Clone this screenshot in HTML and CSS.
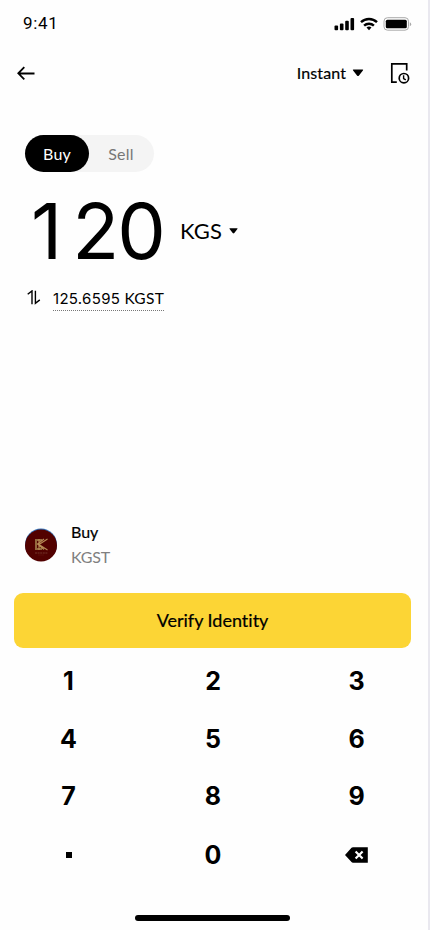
FILE: index.html
```html
<!DOCTYPE html>
<html lang="en">
<head>
<meta charset="utf-8">
<title>Buy KGST</title>
<link rel="stylesheet" href="styles.css">
</head>
<body>
<main class="screen">
  <div class="status">
    <span class="time">9:41</span>
    <svg class="indicators" width="78" height="16" viewBox="0 0 78 16">
      <rect x="0.500" y="9.5" width="3.6" height="4.7" rx="1"/>
      <rect x="5.900" y="7.5" width="3.6" height="6.7" rx="1"/>
      <rect x="11.200" y="4.8" width="3.6" height="9.4" rx="1"/>
      <rect x="16.500" y="2" width="3.6" height="12.2" rx="1"/>
      <g fill="none" stroke="#000" stroke-width="2.4">
        <path d="M27 6.2a11.500 11.500 0 0 1 16 0M30.100 9.700a7.100 7.100 0 0 1 9.800 0"/>
      </g>
      <path d="M35 14.200l-2.500-2.600a4 4 0 0 1 5 0z"/>
      <rect x="50" y="1.700" width="24.500" height="12.500" rx="3.500" fill="none" stroke="#aaa"/>
      <rect x="51.800" y="3.700" width="21" height="8.500" rx="1.500"/>
      <path d="M75.800 6.200v4q1.400-.5 1.400-2t-1.400-2z" fill="#aaa"/>
    </svg>
  </div>
  <header class="topbar">
    <svg class="back" width="18" height="14" viewBox="0 0 18 14"><path d="M17.500 7.500H1.500M7.300 1.200L1.300 7.300l6 6" fill="none" stroke="#000" stroke-width="1.800"/></svg>
    <span class="mode">Instant</span>
    <svg class="mode-caret" width="12" height="8" viewBox="0 0 12 8"><path d="M1.500 .5h9q1.200 0 .4 1L7 6.500q-1 1-2 0L1.100 1.500q-.8-1 .4-1z"/></svg>
    <svg class="history" width="20" height="22" viewBox="0 0 20 22"><g fill="none" stroke="#000" stroke-width="1.700"><path d="M6.800 20.200H1.800V1.800H16.700V8.500"/><circle cx="13.900" cy="16.200" r="4.700"/><path d="M13.600 13.300v3.200l2.200 1.400" stroke-width="1.400"/></g></svg>
  </header>
  <div class="toggle"><span class="tab tab-active">Buy</span><span class="tab">Sell</span></div>
  <section class="amount">
    <span class="value"><span class="lead">1</span>20</span>
    <span class="currency">KGS</span>
    <svg class="caret" width="9" height="6" viewBox="0 0 9 6"><path d="M1 .3h7q1 0 .4.8L5.300 5q-.8.800-1.600 0L.6 1.100Q0 .3 1 .3z"/></svg>
  </section>
  <section class="conversion">
    <svg width="14" height="15" viewBox="0 0 14 15"><path d="M.7 4.300L5 .9V14.200M8.400 .7V13.400L12.800 9.900" fill="none" stroke="#000" stroke-width="1.400"/></svg>
    <span class="converted"><span class="number">125.6595</span> KGST</span>
  </section>
  <section class="asset">
    <svg class="coin" width="32" height="34" viewBox="0 0 32 34">
      <circle cx="16" cy="16.500" r="16" fill="#3673b8"/>
      <ellipse cx="16" cy="17.500" rx="16" ry="16" fill="#520100"/>
      <path d="M10 11h7v2h-5v7h5v2h-7z" fill="#94683e"/>
      <path d="M22.500 11L14 16.500l8.500 5.500M19 11l-6.500 5 6.500 5.500M14 11v11" fill="none" stroke="#b88c57" stroke-width="1.100"/>
      <path d="M10 25h13" stroke="#75372a" stroke-width="1" stroke-dasharray="2 .6"/>
      <path d="M13 27h6" stroke="#65180f" stroke-width=".6"/>
    </svg>
    <div class="asset-text"><span class="action">Buy</span><span class="ticker">KGST</span></div>
  </section>
  <button class="verify">Verify Identity</button>
  <div class="keypad">
    <span>1</span><span>2</span><span>3</span>
    <span>4</span><span>5</span><span>6</span>
    <span>7</span><span>8</span><span>9</span>
    <span><i class="dot"></i></span><span>0</span>
    <span><svg width="23" height="16" viewBox="0 0 23 16"><path d="M0 8L6.500 .8Q7 .2 8 .2H22.800V15.700H8Q7 15.700 6.500 15z"/><path d="M10.600 4.500l7 7m0-7l-7 7" stroke="#fff" stroke-width="2.200"/></svg></span>
  </div>
  <div class="home"></div>
</main>
</body>
</html>
```
FILE: styles.css
```css
* { box-sizing: border-box; }
body { margin: 0; background: #fefefe; color: #000; font-family: Lato, sans-serif; font-variant-ligatures: none; }
svg { display: block; flex: none; }
.screen { width: 430px; height: 930px; overflow: hidden; border-right: 2px solid #e9e8ef; display: flex; flex-direction: column; }
.status { height: 48px; padding: 0 16px 0 23px; display: flex; align-items: center; justify-content: space-between; }
.time { font: 17px/20px Roboto, sans-serif; letter-spacing: .7px; margin-top: -3px; }
.topbar { height: 50px; padding: 0 18px 0 17px; display: flex; align-items: center; }
.mode { margin-left: auto; font-size: 16px; line-height: 20px; -webkit-text-stroke: .2px; letter-spacing: .1px; }
.mode-caret { margin: 0 26px 0 6px; }
.toggle { width: 129px; height: 37px; margin: 37px 0 0 25px; border-radius: 19px; background: #f4f4f4; display: flex; }
.tab { width: 64px; line-height: 38px; text-align: center; font-size: 16px; color: #777; letter-spacing: .2px; }
.tab-active { color: #fff; background: #000; border-radius: 19px; }
.amount { height: 119px; padding-left: 31px; display: flex; align-items: center; }
.value { width: 136px; white-space: nowrap; font: 77px/119px Inter, sans-serif; letter-spacing: -2px; }
.lead { letter-spacing: 10px; }
.currency { font-size: 22px; margin: -2px 0 0 13px; letter-spacing: .2px; }
.caret { margin: -2px 0 0 7px; }
.conversion { height: 20px; padding-left: 27px; margin-top: -4px; display: flex; align-items: center; }
.converted { margin-left: 12px; margin-top: 3px; font-size: 15.5px; line-height: 24px; letter-spacing: .3px; border-bottom: 1px dotted #777; white-space: nowrap; }
.number { font: 15px/23px Inter, sans-serif; }
.asset { height: 52px; margin-top: 211px; padding-left: 25px; display: flex; align-items: center; }
.coin { margin-top: 2px; }
.asset-text { margin-left: 14px; display: flex; flex-direction: column; font-size: 16px; line-height: 25px; }
.action { -webkit-text-stroke: .2px; }
.ticker { color: #808080; letter-spacing: -.2px; }
.verify { width: 397px; height: 55px; flex: none; margin: 23px 0 0 14px; padding: 0; border: 0; border-radius: 9px; background: #fcd535; font: 18px/53px Lato, sans-serif; font-variant-ligatures: none; -webkit-text-stroke: .2px; color: #000; }
.keypad { display: grid; grid-template-columns: 143px 146px 141px; grid-template-rows: 58px 57px 58px 60px; margin: 4px 0 0 -3px; font: 700 25px/30px Inter, sans-serif; }
.keypad span { display: flex; align-items: center; justify-content: center; }
.dot { width: 6px; height: 6px; background: #000; }
.home { width: 155px; height: 6px; border-radius: 3px; background: #000; margin: 30px 0 0 135px; flex: none; }
```
